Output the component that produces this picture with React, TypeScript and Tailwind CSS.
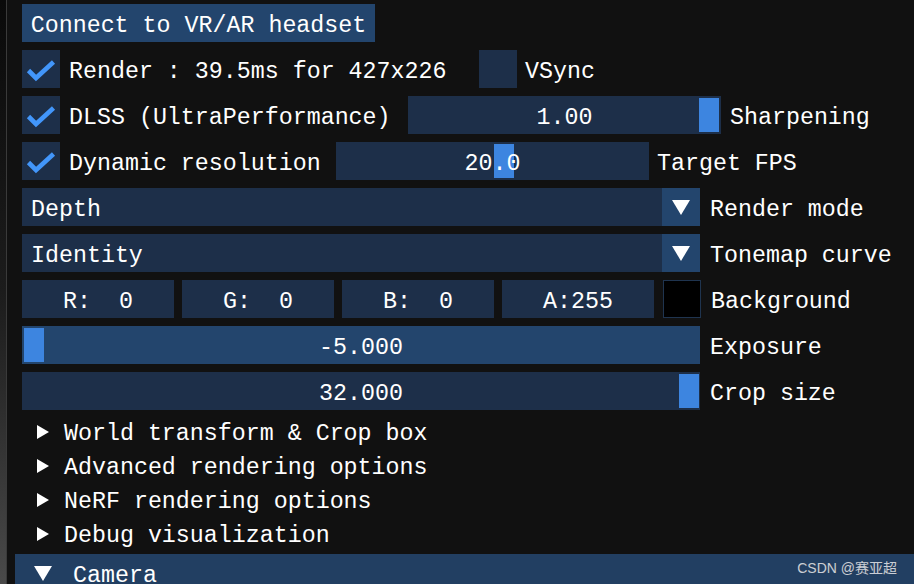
import React from "react";

const mono = { fontFamily: '"Liberation Mono", "DejaVu Sans Mono", monospace' };

// nudges the mono text down so it sits where the pixel font sits
const T = ({ children, className = "" }: { children: React.ReactNode; className?: string }) => (
  <span className={`relative top-[3px] whitespace-pre ${className}`}>{children}</span>
);

const Check = ({ on }: { on: boolean }) => (
  <div className="w-[38px] h-[38px] bg-[#1d2f49] shrink-0 flex items-center justify-center">
    {on && (
      <svg width="38" height="38" viewBox="0 0 38 38">
        <polyline points="6.5,20.5 14,28 31.5,12" fill="none" stroke="#4296fa" strokeWidth="4.6" strokeLinejoin="miter" />
      </svg>
    )}
  </div>
);

const Slider = ({
  value,
  width,
  grab,
  light,
}: {
  value: string;
  width: string;
  grab: string;
  light?: boolean;
}) => (
  <div className={`relative h-[38px] shrink-0 ${width} ${light ? "bg-[#23456d]" : "bg-[#1d2f49]"}`}>
    <div className={`absolute top-[2px] bottom-[2px] w-[20px] bg-[#3d85e0] ${grab}`} />
    <div className="relative h-full flex items-center justify-center">
      <T>{value}</T>
    </div>
  </div>
);

const DownArrow = () => (
  <svg width="18" height="15" viewBox="0 0 18 15" className="shrink-0">
    <polygon points="0,0 18,0 9,15" fill="#ffffff" />
  </svg>
);

const Combo = ({ value }: { value: string }) => (
  <div className="flex h-[38px] w-[678px] shrink-0 bg-[#1d2f49]">
    <div className="flex-1 flex items-center pl-[9px]">
      <T>{value}</T>
    </div>
    <div className="w-[38px] h-full bg-[#23456d] flex items-center justify-center">
      <DownArrow />
    </div>
  </div>
);

const Field = ({ text }: { text: string }) => (
  <div className="w-[152px] h-[38px] shrink-0 bg-[#1d2f49] flex items-center justify-center">
    <T>{text}</T>
  </div>
);

const TreeNode = ({ label }: { label: string }) => (
  <div className="flex items-center h-[26px] pl-[22px]">
    <svg width="12" height="14" viewBox="0 0 12 14" className="shrink-0 relative top-[1px]">
      <polygon points="0,0 12,7 0,14" fill="#ffffff" />
    </svg>
    <T className="ml-[15px]">{label}</T>
  </div>
);

export default function App() {
  return (
    <div className="w-[914px] h-[584px] flex overflow-hidden bg-[#111111] text-white text-[23.3px]" style={mono}>
      <div className="w-[6px] h-full shrink-0 bg-gradient-to-b from-[#0a0a0a] via-[#1c1c1c] to-[#4a4a4a]" />
      <div className="w-[1px] h-full shrink-0 bg-[#3a3a3a]" />
      <div className="relative flex-1 pl-[8px] pt-[4px] flex flex-col">
        <div className="pl-[7px] flex flex-col gap-[8px]">
          <div className="flex">
            <div className="h-[38px] w-[353px] bg-[#23456d] flex items-center justify-center">
              <T>Connect to VR/AR headset</T>
            </div>
          </div>

          <div className="flex items-center h-[38px]">
            <Check on />
            <T className="ml-[9px] w-[410px]">Render : 39.5ms for 427x226</T>
            <Check on={false} />
            <T className="ml-[8px]">VSync</T>
          </div>

          <div className="flex items-center h-[38px]">
            <Check on />
            <T className="ml-[9px] w-[339px]">DLSS (UltraPerformance)</T>
            <Slider value="1.00" width="w-[313px]" grab="right-[2px]" />
            <T className="ml-[9px]">Sharpening</T>
          </div>

          <div className="flex items-center h-[38px]">
            <Check on />
            <T className="ml-[9px] w-[267px]">Dynamic resolution</T>
            <Slider value="20.0" width="w-[313px]" grab="left-[158px]" />
            <T className="ml-[8px]">Target FPS</T>
          </div>

          <div className="flex items-center h-[38px]">
            <Combo value="Depth" />
            <T className="ml-[10px]">Render mode</T>
          </div>

          <div className="flex items-center h-[38px]">
            <Combo value="Identity" />
            <T className="ml-[10px]">Tonemap curve</T>
          </div>

          <div className="flex items-center h-[38px] gap-[8px]">
            <Field text="R:  0" />
            <Field text="G:  0" />
            <Field text="B:  0" />
            <Field text="A:255" />
            <div className="ml-[1px] w-[38px] h-[38px] shrink-0 bg-black border border-[#1f344f]" />
            <T className="ml-[2px]">Background</T>
          </div>

          <div className="flex items-center h-[38px]">
            <Slider value="-5.000" width="w-[678px]" grab="left-[2px]" light />
            <T className="ml-[10px]">Exposure</T>
          </div>

          <div className="flex items-center h-[38px]">
            <Slider value="32.000" width="w-[678px]" grab="right-[1px]" />
            <T className="ml-[10px]">Crop size</T>
          </div>
        </div>

        <div className="mt-[8px] flex flex-col gap-[8px]">
          <TreeNode label="World transform & Crop box" />
          <TreeNode label="Advanced rendering options" />
          <TreeNode label="NeRF rendering options" />
          <TreeNode label="Debug visualization" />
        </div>

        <div className="mt-[8px] h-[38px] shrink-0 bg-[#223f62] flex items-center">
          <div className="pl-[19px] flex items-center">
            <DownArrow />
          </div>
          <T className="ml-[21px]">Camera</T>
        </div>

        <div
          className="absolute right-[17px] bottom-[9px] text-[14px] text-[#c9ced6] leading-none"
          style={{ fontFamily: '"Liberation Sans", "Noto Sans CJK SC", sans-serif', textShadow: "0 0 1px #3b4a5c" }}
        >
          CSDN @赛亚超
        </div>
      </div>
    </div>
  );
}
